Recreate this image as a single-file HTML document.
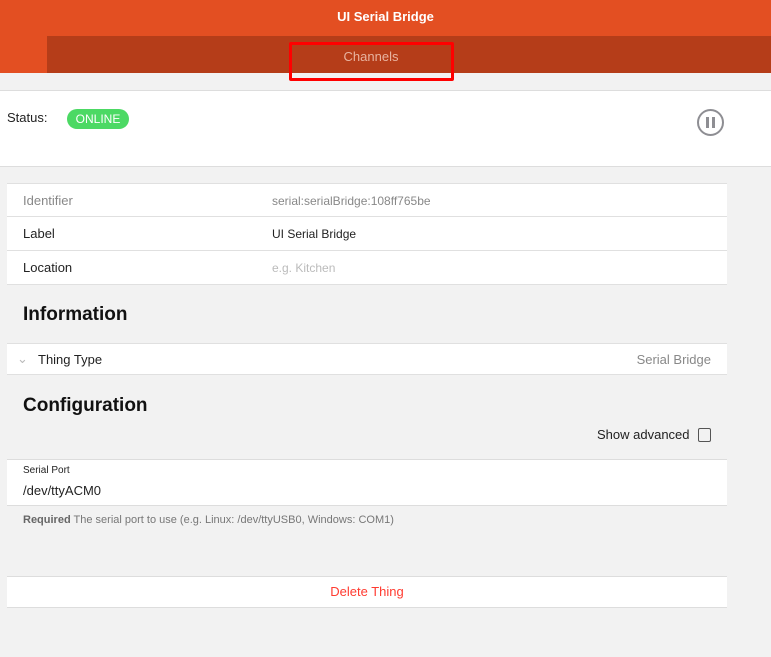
<!DOCTYPE html>
<html><head><style>
*{box-sizing:border-box;margin:0;padding:0}
body{width:771px;height:657px;background:#f2f2f2;font-family:"Liberation Sans",sans-serif;position:relative;overflow:hidden;color:#222}
.a{position:absolute}
.row{position:absolute;left:7px;width:720px;height:34px;background:#fff;border-bottom:1px solid #e0e0e0;font-size:13px}
.row span{position:absolute;top:9px}
</style></head><body>
<div class="a" style="left:0;top:0;width:771px;height:73px;background:#e34f22"></div>
<div class="a" style="left:47px;top:36px;width:724px;height:37px;background:#b53d19"></div>
<div class="a" style="left:0;top:9px;width:771px;text-align:center;color:#fff;font-weight:bold;font-size:13px">UI Serial Bridge</div>
<div class="a" style="left:289px;top:49px;width:164px;text-align:center;color:#e8b3a0;font-size:13px">Channels</div>
<div class="a" style="left:289px;top:42px;width:165px;height:39px;border:3px solid #f00;border-radius:2px"></div>
<div class="a" style="left:0;top:90px;width:771px;height:77px;background:#fff;border-top:1px solid #ddd;border-bottom:1px solid #ddd"></div>
<div class="a" style="left:7px;top:110px;font-size:13px">Status:</div>
<div class="a" style="left:67px;top:109px;width:62px;height:20px;border-radius:10px;background:#4cd964;color:#fff;font-size:12px;line-height:20px;text-align:center">ONLINE</div>
<div class="a" style="left:697px;top:109px;width:27px;height:27px;border:2px solid #8e8e93;border-radius:50%"></div>
<div class="a" style="left:706px;top:117px;width:3px;height:11px;background:#8e8e93"></div>
<div class="a" style="left:712px;top:117px;width:3px;height:11px;background:#8e8e93"></div>
<div class="row" style="top:183px;border-top:1px solid #e0e0e0"><span style="left:16px;color:#888">Identifier</span><span style="left:265px;color:#888;font-size:12px;top:10px">serial:serialBridge:108ff765be</span></div>
<div class="row" style="top:217px"><span style="left:16px">Label</span><span style="left:265px;font-size:12px;top:10px">UI Serial Bridge</span></div>
<div class="row" style="top:251px"><span style="left:16px">Location</span><span style="left:265px;color:#bbb;font-size:12px;top:10px">e.g. Kitchen</span></div>
<div class="a" style="left:23px;top:304px;font-size:19px;font-weight:bold;color:#111">Information</div>
<div class="row" style="top:343px;height:32px;border-top:1px solid #e0e0e0"><span style="left:10px;color:#bbb;top:7px">&#8964;</span><span style="left:31px;top:8px">Thing Type</span><span style="right:16px;color:#888;top:8px">Serial Bridge</span></div>
<div class="a" style="left:23px;top:395px;font-size:19px;font-weight:bold;color:#111">Configuration</div>
<div class="a" style="left:597px;top:427px;font-size:13px">Show advanced</div>
<div class="a" style="left:698px;top:428px;width:13px;height:14px;border:1px solid #555;border-radius:2px"></div>
<div class="a" style="left:7px;top:459px;width:720px;height:47px;background:#fff;border-top:1px solid #ddd;border-bottom:1px solid #ddd"></div>
<div class="a" style="left:23px;top:465px;font-size:10px">Serial Port</div>
<div class="a" style="left:23px;top:483px;font-size:13px">/dev/ttyACM0</div>
<div class="a" style="left:23px;top:514px;font-size:11px;color:#777"><b style="color:#666">Required</b> The serial port to use (e.g. Linux: /dev/ttyUSB0, Windows: COM1)</div>
<div class="a" style="left:7px;top:576px;width:720px;height:32px;background:#fff;border-top:1px solid #ddd;border-bottom:1px solid #ddd;text-align:center;line-height:30px;color:#ff3b30;font-size:13px">Delete Thing</div>
</body></html>
